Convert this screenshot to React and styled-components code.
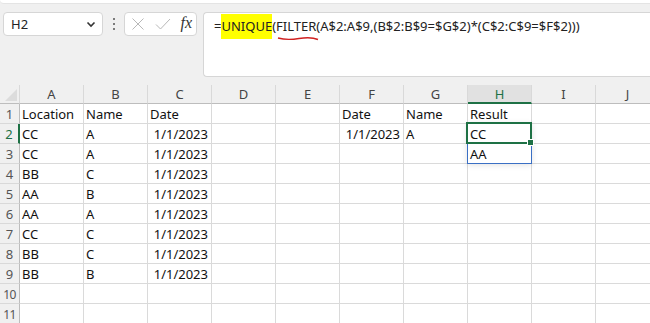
import styled, { createGlobalStyle } from 'styled-components';

const GlobalStyle = createGlobalStyle`
  html, body {
    margin: 0;
    padding: 0;
    background: #f0f0f0;
    overflow: hidden;
  }
  body {
    font-family: "Noto Sans", "Open Sans", sans-serif;
  }
`;

const Page = styled.div`
  width: 650px;
  height: 323px;
  overflow: hidden;
  background: #f0f0f0;
`;

const Ribbon = styled.div`
  height: 3px;
  background: #fff;
  border-bottom-left-radius: 6px;
  border-bottom: 1px solid #e4e4e4;
`;

const FormulaRow = styled.div`
  display: flex;
  align-items: flex-start;
  padding: 8px 0 0 3px;
  height: 65px;
`;

const NameBox = styled.div`
  box-sizing: border-box;
  width: 100px;
  height: 24px;
  background: #fff;
  border: 1px solid #d6d6d6;
  border-radius: 4px;
  display: flex;
  align-items: center;
  justify-content: space-between;
  padding: 0 6px 0 7px;
  font-size: 13px;
  color: #222;
`;

const Dots = styled.div`
  width: 21px;
  height: 24px;
  display: flex;
  flex-direction: column;
  align-items: center;
  justify-content: center;
  gap: 3px;
  span {
    width: 2px;
    height: 2px;
    background: #555;
    border-radius: 1px;
  }
`;

const Buttons = styled.div`
  box-sizing: border-box;
  width: 73px;
  height: 24px;
  background: #fff;
  border: 1px solid #d6d6d6;
  border-radius: 4px;
  display: flex;
  align-items: center;
  justify-content: space-between;
  padding: 0 4px 0 6px;
`;

const Fx = styled.span`
  font-family: "Liberation Serif", "DejaVu Serif", serif;
  font-style: italic;
  font-size: 16px;
  color: #333;
  margin-top: -2px;
`;

const FormulaBox = styled.div`
  box-sizing: border-box;
  margin-left: 6px;
  flex: 1;
  height: 65px;
  background: #fff;
  border: 1px solid #d6d6d6;
  border-right: none;
  border-radius: 4px 0 0 4px;
  padding: 4px 0 0 10px;
  font-size: 13px;
  color: #222;
  white-space: nowrap;
`;

const Highlight = styled.span`
  background: #ffff00;
  padding: 3px 0 4px;
`;

const Squiggle = styled.span`
  position: relative;
  svg {
    position: absolute;
    left: 1px;
    bottom: -6px;
  }
`;

const Sheet = styled.div`
  margin-top: 8px;
  display: grid;
  grid-template-columns: 20px repeat(10, 64px);
  grid-auto-rows: 20px;
  grid-template-rows: 19px;
  font-size: 13px;
`;

const Corner = styled.div`
  box-sizing: border-box;
  background: #f0f0f0;
  border-bottom: 1px solid #bdbdbd;
  border-right: 1px solid #d9d9d9;
  position: relative;
  &::after {
    content: '';
    position: absolute;
    right: 2px;
    bottom: 2px;
    border-style: solid;
    border-width: 0 0 12px 12px;
    border-color: transparent transparent #dcdcdc transparent;
  }
`;

const ColHead = styled.div`
  box-sizing: border-box;
  background: ${p => (p.$active ? '#e1e1e1' : '#f0f0f0')};
  border-bottom: ${p => (p.$active ? '2px solid #1e7145' : '1px solid #bdbdbd')};
  border-right: 1px solid #d9d9d9;
  color: ${p => (p.$active ? '#1e7145' : '#444')};
  display: flex;
  align-items: center;
  justify-content: center;
  padding-top: ${p => (p.$active ? '1px' : '0')};
`;

const RowHead = styled.div`
  box-sizing: border-box;
  background: #f0f0f0;
  border-right: ${p => (p.$active ? '2px solid #1e7145' : '1px solid #bdbdbd')};
  border-bottom: 1px solid #d9d9d9;
  color: ${p => (p.$active ? '#1e7145' : '#555')};
  display: flex;
  align-items: center;
  justify-content: center;
  padding-top: 1px;
  font-size: ${p => (p.$small ? '12px' : '13px')};
  letter-spacing: ${p => (p.$small ? '-0.5px' : '0')};
`;

const Cell = styled.div`
  box-sizing: border-box;
  background: #fff;
  border-right: 1px solid #dadada;
  border-bottom: 1px solid #dadada;
  display: flex;
  align-items: center;
  justify-content: ${p => (p.$right ? 'flex-end' : 'flex-start')};
  padding: 1px 3px 0 2px;
  color: #111;
  white-space: nowrap;
  position: relative;
`;

const Selection = styled.div`
  position: absolute;
  left: -2px;
  top: -2px;
  right: -1px;
  bottom: -1px;
  border: 2px solid #1e7145;
  z-index: 3;
  &::after {
    content: '';
    position: absolute;
    right: -4px;
    bottom: -4px;
    width: 5px;
    height: 5px;
    background: #1e7145;
    border: 1px solid #fff;
  }
`;

const Spill = styled.div`
  position: absolute;
  left: -1px;
  top: -21px;
  right: -1px;
  bottom: -1px;
  border: 1px solid #3a6fc4;
  z-index: 2;
  box-shadow: 0 1px 6px rgba(0, 0, 0, 0.12);
  pointer-events: none;
`;

const cols = ['A', 'B', 'C', 'D', 'E', 'F', 'G', 'H', 'I', 'J'];

const data = {
  1: { A: 'Location', B: 'Name', C: 'Date', F: 'Date', G: 'Name', H: 'Result' },
  2: { A: 'CC', B: 'A', C: '1/1/2023', F: '1/1/2023', G: 'A', H: 'CC' },
  3: { A: 'CC', B: 'A', C: '1/1/2023', H: 'AA' },
  4: { A: 'BB', B: 'C', C: '1/1/2023' },
  5: { A: 'AA', B: 'B', C: '1/1/2023' },
  6: { A: 'AA', B: 'A', C: '1/1/2023' },
  7: { A: 'CC', B: 'C', C: '1/1/2023' },
  8: { A: 'BB', B: 'C', C: '1/1/2023' },
  9: { A: 'BB', B: 'B', C: '1/1/2023' },
  10: {},
  11: {},
};

const isDate = v => /\d+\/\d+\/\d+/.test(v || '');

function Chevron() {
  return (
    <svg width="10" height="7" viewBox="0 0 10 7">
      <path d="M1.5 1.5 L5 5 L8.5 1.5" fill="none" stroke="#333" strokeWidth="1.6" />
    </svg>
  );
}

function Cross() {
  return (
    <svg width="14" height="14" viewBox="0 0 14 14">
      <path d="M1.5 1.5 L12.5 12.5 M12.5 1.5 L1.5 12.5" stroke="#b8b8b8" strokeWidth="1" fill="none" />
    </svg>
  );
}

function Check() {
  return (
    <svg width="16" height="14" viewBox="0 0 16 14">
      <path d="M1 7.5 L5.5 12 L15 2" stroke="#b8b8b8" strokeWidth="1" fill="none" />
    </svg>
  );
}

export default function App() {
  return (
    <Page>
      <GlobalStyle />
      <Ribbon />
      <FormulaRow>
        <NameBox>
          <span>H2</span>
          <Chevron />
        </NameBox>
        <Dots>
          <span />
          <span />
          <span />
        </Dots>
        <Buttons>
          <Cross />
          <Check />
          <Fx>fx</Fx>
        </Buttons>
        <FormulaBox>
          =<Highlight>UNIQUE</Highlight>(
          <Squiggle>
            FILTER
            <svg width="42" height="6" viewBox="0 0 42 6">
              <path d="M1 3 Q10 5.5 22 3.5 Q34 1.5 41 4.5" stroke="#d02020" strokeWidth="1.4" fill="none" />
            </svg>
          </Squiggle>
          (A$2:A$9,(B$2:B$9=$G$2)*(C$2:C$9=$F$2)))
        </FormulaBox>
      </FormulaRow>
      <Sheet>
        <Corner />
        {cols.map(c => (
          <ColHead key={c} $active={c === 'H'}>{c}</ColHead>
        ))}
        {Object.keys(data).map(r => (
          <Row key={r} r={Number(r)} values={data[r]} />
        ))}
      </Sheet>
    </Page>
  );
}

function Row({ r, values }) {
  return (
    <>
      <RowHead $active={r === 2} $small={r >= 10}>{r}</RowHead>
      {cols.map(c => {
        const v = values[c];
        return (
          <Cell key={c} $right={isDate(v)}>
            {v}
            {r === 2 && c === 'H' && <Selection />}
            {r === 3 && c === 'H' && <Spill />}
          </Cell>
        );
      })}
    </>
  );
}
